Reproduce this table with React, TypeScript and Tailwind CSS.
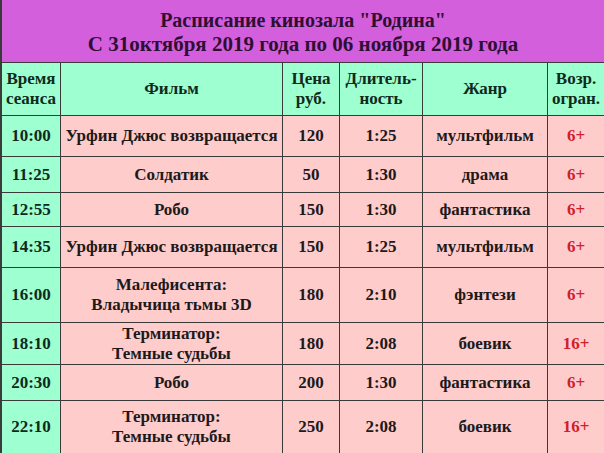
const rows = [
  { time: "10:00", film: ["Урфин Джюс возвращается"], price: "120", dur: "1:25", genre: "мультфильм", age: "6+", h: "h-[40px]" },
  { time: "11:25", film: ["Солдатик"], price: "50", dur: "1:30", genre: "драма", age: "6+", h: "h-[35px]" },
  { time: "12:55", film: ["Робо"], price: "150", dur: "1:30", genre: "фантастика", age: "6+", h: "h-[33px]" },
  { time: "14:35", film: ["Урфин Джюс возвращается"], price: "150", dur: "1:25", genre: "мультфильм", age: "6+", h: "h-[40px]" },
  { time: "16:00", film: ["Малефисента:", "Владычица тьмы 3D"], price: "180", dur: "2:10", genre: "фэнтези", age: "6+", h: "h-[54px]" },
  { time: "18:10", film: ["Терминатор:", "Темные судьбы"], price: "180", dur: "2:08", genre: "боевик", age: "16+", h: "h-[41px]" },
  { time: "20:30", film: ["Робо"], price: "200", dur: "1:30", genre: "фантастика", age: "6+", h: "h-[35px]" },
  { time: "22:10", film: ["Терминатор:", "Темные судьбы"], price: "250", dur: "2:08", genre: "боевик", age: "16+", h: "h-[52px]" },
];

const cell = "flex items-center justify-center text-center leading-[20px]";

export default function App() {
  return (
    <div
      className="w-[604px] h-[453px] overflow-hidden bg-[#3a3a3a] border-l-2 border-[#3a3a3a] text-[#1c1a1a] font-bold"
      style={{ fontFamily: '"Liberation Serif", "DejaVu Serif", serif' }}
    >
      {/* Title */}
      <div className="h-[62px] bg-[#d35fdc] flex flex-col items-center justify-center pt-[2px] text-[#2e0f33]">
        <div className="text-[20px] leading-[24px]">Расписание кинозала "Родина"</div>
        <div className="text-[21px] leading-[24px]">С 31октября 2019 года по 06 ноября 2019 года</div>
      </div>

      <div className="grid grid-cols-[58px_221px_56px_82px_124px_1fr] gap-px mt-px text-[17px]">
        {/* Header */}
        <div className={`${cell} h-[52px] bg-[#9effd0] text-[#0f2a1c]`}>Время<br />сеанса</div>
        <div className={`${cell} h-[52px] bg-[#9effd0] text-[#0f2a1c]`}>Фильм</div>
        <div className={`${cell} h-[52px] bg-[#9effd0] text-[#0f2a1c]`}>Цена<br />руб.</div>
        <div className={`${cell} h-[52px] bg-[#9effd0] text-[#0f2a1c]`}>Длитель-<br />ность</div>
        <div className={`${cell} h-[52px] bg-[#9effd0] text-[#0f2a1c]`}>Жанр</div>
        <div className={`${cell} h-[52px] bg-[#9effd0] text-[#0f2a1c]`}>Возр.<br />огран.</div>

        {rows.map((r, i) => (
          <div key={i} className="contents">
            <div className={`${cell} ${r.h} bg-[#9effd0] text-[#0f2a1c]`}>{r.time}</div>
            <div className={`${cell} ${r.h} flex-col bg-[#ffcccc]`}>
              {r.film.map((l) => (
                <div key={l}>{l}</div>
              ))}
            </div>
            <div className={`${cell} ${r.h} bg-[#ffcccc]`}>{r.price}</div>
            <div className={`${cell} ${r.h} bg-[#ffcccc]`}>{r.dur}</div>
            <div className={`${cell} ${r.h} bg-[#ffcccc]`}>{r.genre}</div>
            <div className={`${cell} ${r.h} bg-[#ffcccc] text-[#d0202a]`}>{r.age}</div>
          </div>
        ))}
      </div>
    </div>
  );
}
